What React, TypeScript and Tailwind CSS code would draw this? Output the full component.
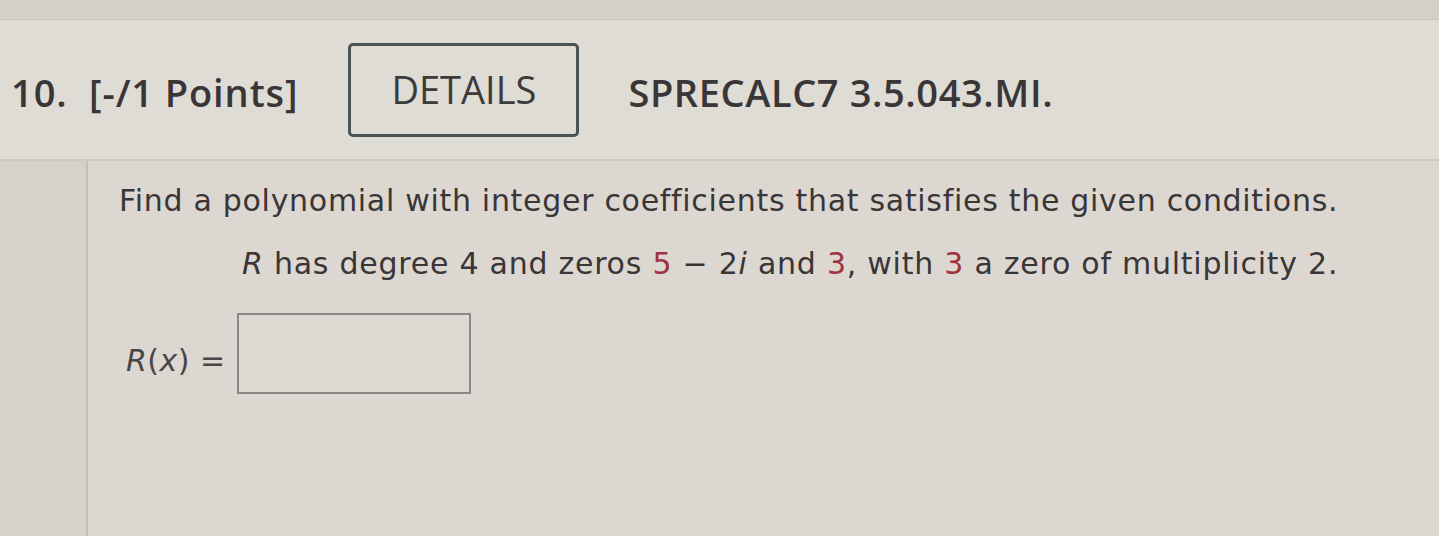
export default function App() {
  const body = { fontFamily: '"DejaVu Sans", Verdana, sans-serif' }
  const head = { fontFamily: '"Open Sans", "Noto Sans", sans-serif' }
  return (
    <div className="w-[1439px] h-[536px] overflow-hidden bg-[#d9d4cd] text-[#3a3536]">
      <div className="h-[20px] bg-[#d4cfc8] border-b border-[#c9c4bd]" />
      <div className="h-[141px] bg-[#dfdbd5] border-b-2 border-[#cdc8c1] flex items-center pl-[11px]" style={head}>
        <span className="mt-[6px] text-[38px] font-semibold tracking-[0.9px] whitespace-pre">10.  [-/1 Points]</span>
        <button className="ml-[50px] w-[231px] h-[94px] border-[3px] border-[#4c5357] rounded-[5px] text-[38px] text-[#3d3a3b] flex items-center justify-center">
          DETAILS
        </button>
        <span className="ml-[49px] mt-[6px] text-[38px] font-semibold tracking-[0.6px]">SPRECALC7 3.5.043.MI.</span>
      </div>
      <div className="flex h-full">
        <div className="w-[88px] shrink-0 border-r-2 border-[#c4bfb8] bg-[#d6d1ca]" />
        <div className="flex-1 bg-[#dcd8d1] pt-[20px] pl-[31px]" style={body}>
          <p className="text-[30px] leading-[40px] tracking-[0.7px] whitespace-nowrap">
            Find a polynomial with integer coefficients that satisfies the given conditions.
          </p>
          <p className="mt-[23px] pl-[123px] text-[30px] leading-[40px] tracking-[0.75px] whitespace-nowrap">
            <i>R</i> has degree 4 and zeros <span className="text-[#a0323f]">5</span> − 2<i>i</i> and{' '}
            <span className="text-[#a0323f]">3</span>, with <span className="text-[#a0323f]">3</span> a zero of
            multiplicity 2.
          </p>
          <div className="mt-[29px] flex items-center pl-[7px]">
            <span className="mt-[14px] text-[30px] tracking-[0.5px] text-[#4a4546]">
              <i>R</i>(<i>x</i>) =
            </span>
            <div className="ml-[11px] w-[234px] h-[81px] border-2 border-[#8c8885] bg-[#ddd9d3]" />
          </div>
        </div>
      </div>
    </div>
  )
}
